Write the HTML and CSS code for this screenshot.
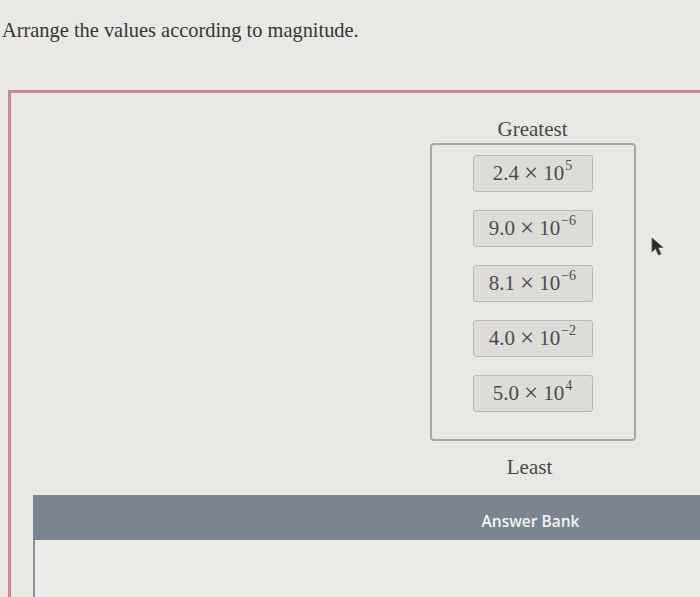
FILE: index.html
```html
<!DOCTYPE html>
<html>
<head>
<meta charset="utf-8">
<link rel="stylesheet" href="styles.css">
</head>
<body>
<div class="page">
  <h1 class="title">Arrange the values according to magnitude.</h1>
  <div class="frame">
    <div class="sorter">
      <div class="label">Greatest</div>
      <div class="dropzone">
        <div class="card">2.4 <span class="times">×</span> 10<sup>5</sup></div>
        <div class="card">9.0 <span class="times">×</span> 10<sup>−6</sup></div>
        <div class="card">8.1 <span class="times">×</span> 10<sup>−6</sup></div>
        <div class="card">4.0 <span class="times">×</span> 10<sup>−2</sup></div>
        <div class="card">5.0 <span class="times">×</span> 10<sup>4</sup></div>
      </div>
      <div class="label least">Least</div>
    </div>
    <div class="bank">
      <div class="bank-head">Answer Bank</div>
      <div class="bank-body"></div>
    </div>
  </div>
  <svg class="cursor" width="14" height="20" viewBox="0 0 14 20">
    <path d="M1 1 L1 15 L4.5 11.5 L7.5 18 L10 17 L7 10.5 L12 10.5 Z" fill="#2a2a2e" stroke="#555" stroke-width="0.8"/>
  </svg>
</div>
</body>
</html>
```
FILE: styles.css
```css
html, body {
  margin: 0;
  padding: 0;
  overflow: hidden;
  background: #e9e8e4;
}
.page {
  position: relative;
  width: 700px;
  height: 597px;
  overflow: hidden;
  background: #e9e8e4;
  font-family: "Liberation Serif", "Times New Roman", serif;
  color: #444;
}
.title {
  margin: 0;
  padding: 18px 0 0 2px;
  font-size: 20.4px;
  line-height: 24px;
  font-weight: normal;
  color: #353535;
}
.frame {
  margin: 48px 0 0 8px;
  border-top: 3px solid #c98b8f;
  border-left: 3px solid #c98b8f;
  padding: 0 0 0 22px;
  height: 510px;
}
.sorter {
  display: flex;
  flex-direction: column;
  align-items: center;
  padding-left: 332px;
}
.label {
  margin-top: 24px;
  font-size: 21px;
  line-height: 24px;
  color: #474747;
}
.label.least {
  margin-top: 14px;
  padding-right: 6px;
}
.dropzone {
  margin-top: 2px;
  width: 206px;
  height: 298px;
  box-sizing: border-box;
  border: 2px solid #a9a8a5;
  border-radius: 4px;
  padding-top: 10px;
  display: flex;
  flex-direction: column;
  align-items: center;
  gap: 18px;
}
.card {
  width: 120px;
  height: 37px;
  box-sizing: border-box;
  border: 1px solid #bab9b6;
  border-radius: 3px;
  background: #dddcd9;
  display: flex;
  align-items: center;
  justify-content: center;
  gap: 5px;
  font-size: 21px;
  color: #4b4b4b;
  white-space: nowrap;
}
.times {
  font-size: 25px;
  line-height: 0;
  position: relative;
  top: -1px;
}
.card sup {
  font-size: 14px;
  line-height: 0;
  position: relative;
  top: -8px;
  margin-left: -4px;
}
.bank {
  margin-top: 16px;
}
.bank-head {
  height: 45px;
  box-sizing: border-box;
  padding-top: 6px;
  background: #7a8591;
  color: #f3f3f3;
  font-family: "Open Sans", sans-serif;
  font-size: 15.5px;
  font-weight: 600;
  display: flex;
  align-items: center;
  justify-content: center;
  padding-left: 328px;
}
.bank-body {
  height: 80px;
  border-left: 2px solid #8e9298;
  background: #ecebe8;
}
.cursor {
  position: absolute;
  left: 651px;
  top: 237px;
}
```
